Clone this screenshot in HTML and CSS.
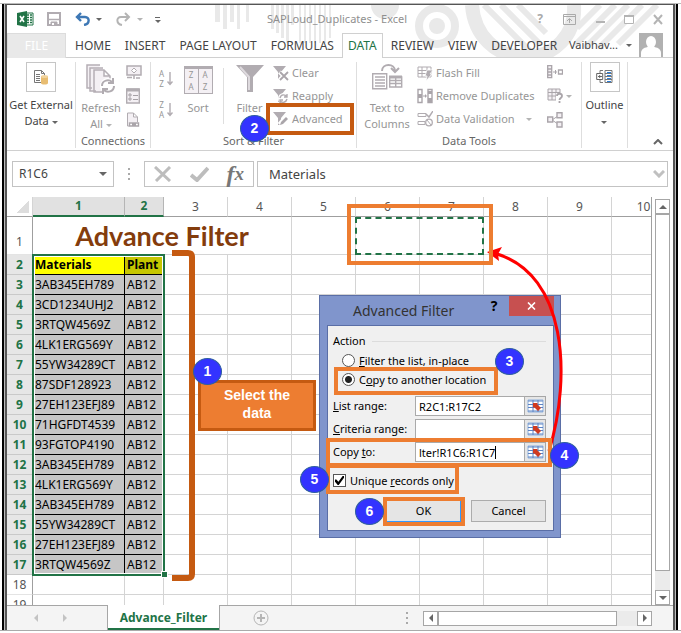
FILE: index.html
```html
<!DOCTYPE html>
<html lang="en">
<head>
<meta charset="utf-8">
<title>SAPLoud_Duplicates - Excel</title>
<link rel="stylesheet" href="styles.css">
</head>
<body>
<div class="screen">
<div class="frame">
<div class="window">

  <svg class="backdrop" width="460" height="53" viewBox="0 0 460 53" aria-hidden="true">
    <g fill="#e9e9e9">
      <path d="M0 0h5v17h-5zM8 0h4v24h-4zM15 0h4v17h-4zM22 0h3v24h-3zM31 0h3v17h-3zM56 0h3v24h-3zM61 0h3v28h-3zM66 0h3v33h-3zM71 0h3v38h-3zM76 0h3v20h-3zM84 0h2v38h-2zM89 0h2v38h-2zM94 0h2v38h-2zM99 0h2v38h-2zM104 0h2v38h-2zM109 0h2v38h-2zM114 0h2v33h-2z"/>
      <path d="M156 0h28a14 14 0 0 1-28 0z"/>
      <circle cx="222" cy="21" r="8"/>
    </g>
    <g fill="none" stroke="#e9e9e9">
      <circle cx="222" cy="21" r="18" stroke-width="8"/>
      <path d="M257 0c2 30 24 52 53 52s51-22 49-52" stroke-width="14"/>
      <path d="M269 0l46 46M286 0l40 40M303 0l28 28" stroke-width="6"/>
      <path d="M362 23l23-23M360 40l40-40M370 43l43-43M384 43l43-43M403 39l39-39" stroke-width="6"/>
    </g>
  </svg>

  <header class="titlebar">
    <svg class="app-icon" width="17" height="16" viewBox="0 0 17 16"><path d="M8 2h8v12H8z" fill="#fff" stroke="#217346"/><path d="M10 4h2M13 4h2M10 6.500h2M13 6.500h2M10 9h2M13 9h2M10 11.500h2M13 11.500h2" stroke="#217346" stroke-width="1.500"/><path d="M0 2l10-2v16L0 14z" fill="#217346"/><path d="M3 5l4 6M7 5l-4 6" stroke="#fff" stroke-width="1.600"/></svg>
    <button class="icon-btn save" aria-label="Save"><svg width="14" height="14" viewBox="0 0 14 14"><path d="M1 1h12v12H1z" fill="#fff" stroke="#b1acb1" stroke-width="2"/><path d="M2 7.500h10" stroke="#b1acb1" stroke-width="1.500"/><path d="M4 10h6v3H4z" fill="#b1acb1" stroke="#b1acb1"/><path d="M5 11h2v2H5z" fill="#fff"/></svg></button>
    <button class="icon-btn undo" aria-label="Undo"><svg width="16" height="14" viewBox="0 0 16 14"><path d="M6 1L2 5l4 4M2 5h8c5 0 5 7-1 8" fill="none" stroke="#3e78b5" stroke-width="2.400"/></svg></button>
    <span class="caret"></span>
    <button class="icon-btn redo" aria-label="Redo"><svg width="16" height="14" viewBox="0 0 16 14"><path d="M10 1l4 4-4 4M14 5H6c-5 0-5 7 1 8" fill="none" stroke="#b4b4b4" stroke-width="2"/></svg></button>
    <span class="caret pale"></span>
    <span class="customize"></span>
    <h1 class="doc-title">SAPLoud_Duplicates - Excel</h1>
    <div class="window-tools">
      <button class="icon-btn help" aria-label="Help">?</button>
      <button class="icon-btn" aria-label="Ribbon display options"><svg width="13" height="11" viewBox="0 0 13 11"><path d="M.5.500h12v10H.5zM.5 2.500h12M6.500 9V5M4 7l2.500-2.500L9 7" fill="none" stroke="#aaa"/></svg></button>
      <button class="icon-btn" aria-label="Minimize"><svg width="10" height="11" viewBox="0 0 10 11"><path d="M1 8h9" stroke="#b4b4b4" stroke-width="2"/></svg></button>
      <button class="icon-btn" aria-label="Maximize"><svg width="10" height="11" viewBox="0 0 10 11"><path d="M.5 1.500h9v8h-9z" fill="#fff" stroke="#b4b4b4"/><path d="M0 2h10" stroke="#b4b4b4" stroke-width="2"/></svg></button>
      <button class="icon-btn" aria-label="Close"><svg width="10" height="11" viewBox="0 0 10 11"><path d="M1 1l8 9M9 1l-8 9" stroke="#b4b4b4" stroke-width="2"/></svg></button>
    </div>
  </header>

  <nav class="tabs">
    <button class="tab file">FILE</button>
    <button class="tab">HOME</button>
    <button class="tab">INSERT</button>
    <button class="tab">PAGE LAYOUT</button>
    <button class="tab">FORMULAS</button>
    <button class="tab active">DATA</button>
    <button class="tab">REVIEW</button>
    <button class="tab">VIEW</button>
    <button class="tab">DEVELOPER</button>
    <button class="account">Vaibhav... <span class="caret dark"></span></button>
    <svg class="avatar" width="24" height="24" viewBox="0 0 24 24"><path d="M0 0h24v24H0z" fill="#b1b1b1"/><ellipse cx="12" cy="9" rx="5" ry="6" fill="#fff"/><path d="M2 24v-4c0-4 4-6 8-6h4c4 0 8 2 8 6v4z" fill="#fff"/></svg>
  </nav>

  <section class="ribbon">
    <div class="group external">
      <button class="big">
        <span class="boxed"><svg width="16" height="16" viewBox="0 0 16 16"><path d="M1.500 1.500h7l3 3v9h-10zM8.500 1.500v3h3M3 5.500h4M3 7.500h4M3 9.500h4M3 11.500h4" fill="#fff" stroke="#777"/><path d="M8 7h7v7c0 2-7 2-7 0z" fill="#e8bd72"/><ellipse cx="11.500" cy="7.500" rx="3.500" ry="1.500" fill="#f1d39c"/></svg></span>
        <span>Get External<br>Data <i class="caret dark"></i></span>
      </button>
    </div>
    <div class="group connections">
      <div class="tools">
        <button class="big off">
          <svg width="32" height="32" viewBox="0 0 32 32"><path d="M7 25H2V2h13M11 28H5V5h13M9 7h10l6 6v16H9zM19 7v6h6" fill="#f4f0f4" stroke="#b5afb5" stroke-width="1.500"/><circle cx="23" cy="23" r="8" fill="#fff"/><path d="M17 23c0-6 7-7 10-4M29 23c0 6-7 7-10 4M28 15v5h-5M18 31v-5h5" fill="none" stroke="#b1acb1" stroke-width="2"/></svg>
          <span>Refresh<br>All <i class="caret pale"></i></span>
        </button>
        <div class="stack icons">
          <button class="small off" aria-label="Connections"><svg width="16" height="15" viewBox="0 0 16 15"><path d="M1 1h14v9H1z" fill="#f4f0f4" stroke="#b1acb1" stroke-width="1.500"/><path d="M8 3l2.500 2.500L8 8 5.500 5.500z" fill="#fff" stroke="#b1acb1"/><path d="M1 12.500h5M8 10v4M10 13h4" stroke="#b1acb1" stroke-width="1.500"/></svg></button>
          <button class="small off" aria-label="Properties"><svg width="14" height="16" viewBox="0 0 14 16"><path d="M.7 1h12.600v14H.7z" fill="#f4f0f4" stroke="#b1acb1" stroke-width="1.400"/><path d="M1 2h12" stroke="#b1acb1" stroke-width="3"/><path d="M3 6h2v2H3zM3 10h2v2H3zM7 7.500h5M7 11.500h5" fill="none" stroke="#a5a0a5"/></svg></button>
          <button class="small off" aria-label="Edit links"><svg width="14" height="16" viewBox="0 0 14 16"><path d="M1.500 1h6l4 4v9h-10zM7.500 1v4h4" fill="#f4f0f4" stroke="#b1acb1"/><path d="M3 10h11v6H3z" fill="#fff"/><path d="M3.500 11h4v3h-4zM8.500 11h4v3h-4zM6 12.500h4" fill="none" stroke="#aaa5aa" stroke-width="1.400"/></svg></button>
        </div>
      </div>
      <h2>Connections</h2>
    </div>
    <div class="group sort">
      <div class="tools">
        <div class="stack sorters">
          <button class="small off" aria-label="Sort A to Z"><span class="az"><span>A</span><span>Z</span></span><svg width="6" height="16" viewBox="0 0 6 16"><path d="M3 1v12M.5 10.500L3 13.500l2.500-3" fill="none" stroke="#b1acb1" stroke-width="1.400"/></svg></button>
          <button class="small off" aria-label="Sort Z to A"><span class="az"><span>Z</span><span>A</span></span><svg width="6" height="16" viewBox="0 0 6 16"><path d="M3 1v12M.5 10.500L3 13.500l2.500-3" fill="none" stroke="#b1acb1" stroke-width="1.400"/></svg></button>
        </div>
        <button class="big off sort-btn">
          <span class="sort-icon"><b><span>Z</span><span>A</span></b><b><span>A</span><span>Z</span></b></span>
          <span>Sort</span>
        </button>
        <span class="divider"></span>
        <button class="big off filter-btn">
          <svg width="28" height="32" viewBox="0 0 28 32"><path d="M0 2h28L17 14v15h-6V14z" fill="#b1acb1"/><path d="M4 4l9 10v13" fill="none" stroke="#dedade" stroke-width="2"/></svg>
          <span>Filter</span>
        </button>
        <div class="stack">
          <button class="small off"><svg width="16" height="16" viewBox="0 0 16 16"><path d="M0 1h13L8 7v7H5V7z" fill="#b1acb1"/><path d="M6.500 7l8 8M14.500 7l-8 8" stroke="#fff" stroke-width="4"/><path d="M7 7l8 8M15 7l-8 8" stroke="#aaa5aa" stroke-width="1.800"/></svg>Clear</button>
          <button class="small off"><svg width="16" height="16" viewBox="0 0 16 16"><path d="M0 1h13L8 7v7H5V7z" fill="#b1acb1"/><circle cx="10.500" cy="10.500" r="5.500" fill="#fff"/><path d="M7 10c1-4 5-4 7-1M14 6v3h-3M14 11c-1 4-5 4-7 2M7 15v-3h3" fill="none" stroke="#b1acb1" stroke-width="1.400"/></svg>Reapply</button>
          <button class="small off"><svg width="16" height="16" viewBox="0 0 16 16"><path d="M0 1h13L8 7v7H5V7z" fill="#b1acb1"/><path d="M7 14l7-8" stroke="#fff" stroke-width="6"/><path d="M7 14l1-3 5-5 2 2-5 5z" fill="#aaa5aa"/></svg>Advanced</button>
        </div>
      </div>
      <h2>Sort &amp; Filter</h2>
    </div>
    <div class="group data">
      <div class="tools">
        <button class="big off columns-btn">
          <svg width="32" height="32" viewBox="0 0 32 32"><path d="M1.700 10.700h14v15h-14z" fill="#fff" stroke="#b1acb1" stroke-width="1.400"/><path d="M4 14h10M4 17h10M4 20h10M4 23h10" stroke="#b1acb1" stroke-width="1.400"/><path d="M18.700 14h12v10h-12zM24.700 14v10M19 17.500h12M19 20.500h12" fill="#fff" stroke="#b1acb1" stroke-width="1.400"/><path d="M18 14h13" stroke="#b1acb1" stroke-width="3"/><path d="M11 8c0-8 13-8 13 0M20 5l4 4 4-4" fill="none" stroke="#b1acb1" stroke-width="2"/></svg>
          <span>Text to<br>Columns</span>
        </button>
        <div class="stack">
          <button class="small off"><svg width="16" height="16" viewBox="0 0 16 16"><path d="M1 2h13v10H1zM1 5.500h13M1 8.500h13M5 2v10M10 2v10" fill="#fff" stroke="#b1acb1"/><path d="M10 5h6l-3 4h2l-6 7 1-5H8z" fill="#b1acb1" stroke="#fff" stroke-width=".8"/></svg>Flash Fill</button>
          <button class="small off"><svg width="16" height="16" viewBox="0 0 16 16"><path d="M1 1.500h4v13H1zM11 1.500h4v13h-4z" fill="#fff" stroke="#aaa5aa" stroke-width="1.400"/><path d="M1 6h4v4H1zM11 3h4v3h-4zM11 10h4v4h-4z" fill="#aaa5aa"/><path d="M6 8h4M8.500 6.500v3" stroke="#aaa5aa"/></svg>Remove Duplicates</button>
          <button class="small off"><svg width="16" height="16" viewBox="0 0 16 16"><path d="M1 2.500h8v3H1zM1 10.500h7v3H1z" fill="#fff" stroke="#b1acb1"/><path d="M9 3l3 3 4-6" fill="none" stroke="#b1acb1" stroke-width="1.500"/><circle cx="12" cy="11.500" r="3.300" fill="#fff" stroke="#b1acb1" stroke-width="1.300"/><path d="M10 9l4 5" stroke="#b1acb1"/></svg>Data Validation <i class="caret pale wide"></i></button>
        </div>
        <div class="stack icons last">
          <button class="small off" aria-label="Consolidate"><svg width="16" height="14" viewBox="0 0 16 14"><path d="M.7.700h4v12h-4zM1 4h4M1 7h4M1 10h4" fill="#f4f0f4" stroke="#aaa5aa" stroke-width="1.300"/><path d="M6 7h4M8.500 5v4" stroke="#aaa5aa"/><path d="M11.500 5h4v4h-4z" fill="#fff" stroke="#aaa5aa" stroke-width="1.300"/></svg></button>
          <button class="small off" aria-label="What-if analysis"><svg width="16" height="16" viewBox="0 0 16 16"><path d="M1 1h12v11H1zM1 4.500h12M1 8h12M5 1v11M9 1v11" fill="#f4f0f4" stroke="#aaa5aa"/><path d="M9 5h7v11H9z" fill="#fff"/><path d="M10 8c0-3 5-3 5 0 0 2-2.500 2-2.500 4M12.500 13v2" fill="none" stroke="#aaa5aa" stroke-width="1.800"/></svg><i class="caret pale"></i></button>
          <button class="small off" aria-label="Relationships"><svg width="16" height="16" viewBox="0 0 16 16"><path d="M5 8l6-4M5 8l6 4" stroke="#aaa5aa"/><path d="M.7 5h5v5h-5zM10 .7h5v5h-5zM10 10h5v5h-5z" fill="#f4f0f4" stroke="#aaa5aa" stroke-width="1.400"/></svg></button>
        </div>
      </div>
      <h2>Data Tools</h2>
    </div>
    <div class="group outline">
      <button class="big">
        <span class="boxed"><svg width="17" height="16" viewBox="0 0 17 16"><path d="M9 1.500h7v12H9zM9 4.500h7M9 7.500h7M9 10.500h7" fill="#fff" stroke="#777"/><path d="M11 3.500h4M11 6.500h4M11 9.500h4M11 12.500h4" stroke="#2b7cd3"/><path d="M4 4V1.500h3M4 11v2.500h3" fill="none" stroke="#777"/><path d="M.7 4.500h6v6h-6zM2 7.500h4M3.700 6v3" fill="none" stroke="#666"/></svg></span>
        <span>Outline<br><i class="caret dark"></i></span>
      </button>
    </div>
    <button class="icon-btn collapse" aria-label="Collapse the ribbon"><svg width="10" height="6" viewBox="0 0 10 6"><path d="M1 5l4-4 4 4" fill="none" stroke="#666" stroke-width="2"/></svg></button>
  </section>

  <section class="formula-bar">
    <div class="name-box"><input type="text" value="R1C6" aria-label="Name box"><button class="icon-btn" aria-label="Open names"><i class="caret big-caret"></i></button></div>
    <span class="grip"></span>
    <div class="entry-tools">
      <button class="icon-btn" aria-label="Cancel entry"><svg width="18" height="16" viewBox="0 0 18 16"><path d="M1 1l15 14M16 1L2 15" stroke="#bdbdbd" stroke-width="3"/></svg></button>
      <button class="icon-btn" aria-label="Enter"><svg width="19" height="16" viewBox="0 0 19 16"><path d="M1 9l6 5L18 2" fill="none" stroke="#bdbdbd" stroke-width="4"/></svg></button>
      <button class="icon-btn fx" aria-label="Insert function">f<small>x</small></button>
    </div>
    <div class="formula"><input type="text" value="Materials" aria-label="Formula"><svg width="12" height="8" viewBox="0 0 12 8"><path d="M1 1l5 5 5-5" fill="none" stroke="#c0c0c0" stroke-width="3"/></svg></div>
  </section>

  <section class="sheet">
    <div class="cells">
      <table>
        <colgroup><col class="c-head"><col class="c-one"><col class="c-two"><col class="c-std"><col class="c-std"><col class="c-std"><col class="c-std"><col class="c-std"><col class="c-std"><col class="c-std"><col class="c-std"></colgroup>
        <thead>
          <tr><th class="corner"><span></span></th><th class="on">1</th><th class="on">2</th><th>3</th><th>4</th><th>5</th><th>6</th><th>7</th><th>8</th><th>9</th><th>10</th></tr>
        </thead>
        <tbody>
          <tr class="title-row"><th>1</th><td colspan="4">Advance Filter</td><td></td><td></td><td></td><td></td><td></td><td></td></tr>
          <tr class="sel heading"><th>2</th><td>Materials</td><td>Plant</td><td></td><td></td><td></td><td></td><td></td><td></td><td></td><td></td></tr>
          <tr class="sel"><th>3</th><td>3AB345EH789</td><td>AB12</td><td></td><td></td><td></td><td></td><td></td><td></td><td></td><td></td></tr>
          <tr class="sel"><th>4</th><td>3CD1234UHJ2</td><td>AB12</td><td></td><td></td><td></td><td></td><td></td><td></td><td></td><td></td></tr>
          <tr class="sel"><th>5</th><td>3RTQW4569Z</td><td>AB12</td><td></td><td></td><td></td><td></td><td></td><td></td><td></td><td></td></tr>
          <tr class="sel"><th>6</th><td>4LK1ERG569Y</td><td>AB12</td><td></td><td></td><td></td><td></td><td></td><td></td><td></td><td></td></tr>
          <tr class="sel"><th>7</th><td>55YW34289CT</td><td>AB12</td><td></td><td></td><td></td><td></td><td></td><td></td><td></td><td></td></tr>
          <tr class="sel"><th>8</th><td>87SDF128923</td><td>AB12</td><td></td><td></td><td></td><td></td><td></td><td></td><td></td><td></td></tr>
          <tr class="sel"><th>9</th><td>27EH123EFJ89</td><td>AB12</td><td></td><td></td><td></td><td></td><td></td><td></td><td></td><td></td></tr>
          <tr class="sel"><th>10</th><td>71HGFDT4539</td><td>AB12</td><td></td><td></td><td></td><td></td><td></td><td></td><td></td><td></td></tr>
          <tr class="sel"><th>11</th><td>93FGTOP4190</td><td>AB12</td><td></td><td></td><td></td><td></td><td></td><td></td><td></td><td></td></tr>
          <tr class="sel"><th>12</th><td>3AB345EH789</td><td>AB12</td><td></td><td></td><td></td><td></td><td></td><td></td><td></td><td></td></tr>
          <tr class="sel"><th>13</th><td>4LK1ERG569Y</td><td>AB12</td><td></td><td></td><td></td><td></td><td></td><td></td><td></td><td></td></tr>
          <tr class="sel"><th>14</th><td>3AB345EH789</td><td>AB12</td><td></td><td></td><td></td><td></td><td></td><td></td><td></td><td></td></tr>
          <tr class="sel"><th>15</th><td>55YW34289CT</td><td>AB12</td><td></td><td></td><td></td><td></td><td></td><td></td><td></td><td></td></tr>
          <tr class="sel"><th>16</th><td>27EH123EFJ89</td><td>AB12</td><td></td><td></td><td></td><td></td><td></td><td></td><td></td><td></td></tr>
          <tr class="sel"><th>17</th><td>3RTQW4569Z</td><td>AB12</td><td></td><td></td><td></td><td></td><td></td><td></td><td></td><td></td></tr>
          <tr><th>18</th><td></td><td></td><td></td><td></td><td></td><td></td><td></td><td></td><td></td><td></td></tr>
          <tr><th>19</th><td></td><td></td><td></td><td></td><td></td><td></td><td></td><td></td><td></td><td></td></tr>
        </tbody>
      </table>
      <div class="selection"></div>
      <div class="marquee"></div>
    </div>
    <div class="vscroll">
      <button class="icon-btn step" aria-label="Scroll up"><i class="tri up"></i></button>
      <span class="thumb"></span><span class="track"></span>
      <button class="icon-btn step" aria-label="Scroll down"><i class="tri down"></i></button>
    </div>
  </section>

  <footer class="sheet-bar">
    <span class="nav-arrows"><i class="tri left pale"></i><i class="tri right pale"></i></span>
    <button class="sheet-tab">Advance_Filter</button>
    <button class="icon-btn add" aria-label="New sheet"><svg width="16" height="16" viewBox="0 0 16 16"><circle cx="8" cy="8" r="7" fill="none" stroke="#b5b5b5"/><path d="M8 4v8M4 8h8" stroke="#b5b5b5" stroke-width="2"/></svg></button>
    <span class="grip"></span>
    <div class="hscroll">
      <button class="icon-btn step" aria-label="Scroll left"><i class="tri left"></i></button>
      <span class="thumb"></span><span class="track"></span>
      <button class="icon-btn step" aria-label="Scroll right"><i class="tri right"></i></button>
    </div>
  </footer>
</div>
</div>
</div>

<form class="dialog" role="dialog" aria-labelledby="dialog-title">
  <div class="dialog-head">
    <h2 id="dialog-title">Advanced Filter</h2>
    <button type="button" class="icon-btn dialog-help" aria-label="Help">?</button>
    <button type="button" class="dialog-close" aria-label="Close"><svg width="9" height="8" viewBox="0 0 9 8"><path d="M1 .5l7 7M8 .5l-7 7" stroke="#fff" stroke-width="1.600"/></svg></button>
  </div>
  <div class="dialog-body">
    <div class="legend"><span>Action</span></div>
    <label class="choice"><input type="radio" name="action"><span><u>F</u>ilter the list, in-place</span></label>
    <label class="choice"><input type="radio" name="action" checked><span>C<u>o</u>py to another location</span></label>
    <div class="fields">
      <div class="field"><label for="list"><u>L</u>ist range:</label><input id="list" type="text" value="R2C1:R17C2"><button type="button" aria-label="Pick list range"><svg width="17" height="14" viewBox="0 0 17 14"><path d="M1 1h15v12H1z" fill="#fff" stroke="#8fb0dc"/><path d="M1 2h15M1 5.500h15M1 8.500h15M1 12h15M6 1v12M11 1v12" stroke="#5b83c4"/><path d="M6 4h5l-1 1 4 4-3 3-4-4-1 1z" fill="#d03a20"/></svg></button></div>
      <div class="field"><label for="criteria"><u>C</u>riteria range:</label><input id="criteria" type="text" value=""><button type="button" aria-label="Pick criteria range"><svg width="17" height="14" viewBox="0 0 17 14"><path d="M1 1h15v12H1z" fill="#fff" stroke="#8fb0dc"/><path d="M1 2h15M1 5.500h15M1 8.500h15M1 12h15M6 1v12M11 1v12" stroke="#5b83c4"/><path d="M6 4h5l-1 1 4 4-3 3-4-4-1 1z" fill="#d03a20"/></svg></button></div>
      <div class="field"><label for="copy">Copy <u>t</u>o:</label><input id="copy" type="text" value="lter!R1C6:R1C7"><button type="button" aria-label="Pick destination"><svg width="17" height="14" viewBox="0 0 17 14"><path d="M1 1h15v12H1z" fill="#fff" stroke="#8fb0dc"/><path d="M1 2h15M1 5.500h15M1 8.500h15M1 12h15M6 1v12M11 1v12" stroke="#5b83c4"/><path d="M6 4h5l-1 1 4 4-3 3-4-4-1 1z" fill="#d03a20"/></svg></button><span class="text-caret"></span></div>
    </div>
    <label class="choice unique"><input type="checkbox" checked><span>Unique <u>r</u>ecords only</span></label>
    <div class="actions"><button type="button" class="push primary">OK</button><button type="button" class="push">Cancel</button></div>
  </div>
</form>

<div class="notes">
  <svg class="strokes" width="681" height="633" viewBox="0 0 681 633" aria-hidden="true">
    <path d="M172 253h16q4 0 4 4v317q0 4-4 4h-16" fill="none" stroke="#c55a11" stroke-width="6"/>
    <path d="M549 451C572 375 566 275 497 254" fill="none" stroke="#f00" stroke-width="3"/>
    <path d="M487 252l15-5-4 7 1 7z" fill="#f00"/>
  </svg>
  <div class="mark mark-advanced"></div>
  <div class="mark mark-target"></div>
  <div class="mark mark-radio"></div>
  <div class="mark mark-unique"></div>
  <div class="mark mark-copy"></div>
  <div class="mark mark-ok"></div>
  <div class="callout">Select the data</div>
  <span class="badge b1">1</span><span class="badge b2">2</span><span class="badge b3">3</span>
  <span class="badge b4">4</span><span class="badge b5">5</span><span class="badge b6">6</span>
</div>
</body>
</html>
```
FILE: styles.css
```css
* { box-sizing: border-box; }
body { margin: 0; background: #fff; color: #444; font: 12px/16px "Noto Sans", sans-serif; overflow: hidden; position: relative; }
h1, h2 { margin: 0; font: inherit; }
button, input { font: inherit; color: inherit; }
button { padding: 0; border: 0; background: none; white-space: nowrap; }
svg { display: block; flex: none; }
.icon-btn { display: flex; align-items: center; justify-content: center; }

/* window frame */
.screen { height: calc(100vh - 5px); margin: 3px 0 2px; border-top: 1px solid #bbb; border-bottom: 1px solid #aaa; }
.frame { height: 100%; margin: 0 3px 0 2px; padding: 0 1px; border: solid #000; border-width: 0 2px; background: #bbb; }
.window { position: relative; height: 100%; display: flex; flex-direction: column; background: #fff; border: solid #555; border-width: 1px 2px 0; }
.backdrop { position: absolute; top: 0; left: 208px; }

.caret { display: inline-block; width: 0; height: 0; border: 3px solid transparent; border-top-color: #666; border-bottom: 0; vertical-align: middle; }
.caret.pale { border-top-color: #b4b4b4; }
.caret.wide { margin-left: 8px; }
.big-caret { border-width: 4px; border-bottom: 0; }

/* title bar */
.titlebar { position: relative; height: 28px; display: flex; align-items: center; padding: 0 10px; flex: none; }
.save { margin-left: 13px; }
.undo { margin-left: 14px; margin-right: 5px; }
.redo { margin-left: 13px; margin-right: 6px; }
.customize { width: 5px; height: 5px; margin-left: 12px; border-top: 1px solid #666; position: relative; }
.customize::after { content: ""; position: absolute; top: 2px; left: 0; border: 3px solid transparent; border-top-color: #666; border-bottom: 0; }
.doc-title { margin-left: 107px; color: #8f8f8f; flex: 1; font-size: 11px; white-space: nowrap; }
.window-tools { display: flex; align-items: center; gap: 19px; }
.help { color: #aaa; font-weight: 700; width: 8px; }

/* ribbon tabs */
.tabs { position: relative; height: 25px; display: flex; align-items: stretch; border-bottom: 1px solid #d0d0d0; flex: none; }
.tab { height: 25px; margin: 0 1px; padding: 0 5px; border: 1px solid transparent; border-bottom: 0; }
.tab.file { width: 59px; margin: 0 2px 0 0; background: #e9e9e9; border-color: #dcdcdc; color: #fff; }
.tab.active { background: #fff; border-color: #d0d0d0; color: #217346; }
.account { display: flex; align-items: center; gap: 8px; margin: 0 7px 0 auto; font-size: 11px; }
.avatar { margin-right: 10px; }

/* ribbon */
.ribbon { position: relative; height: 93px; display: flex; padding: 4px 0 0; border-bottom: 1px solid #d0d0d0; flex: none; font-size: 11px; }
.group { height: 86px; border-right: 1px solid #dedede; display: flex; flex-direction: column; flex: none; }
.group h2 { margin-top: auto; text-align: center; color: #666; line-height: 14px; }
.external { width: 69px; }
.connections { width: 75px; }
.sort { width: 206px; }
.data { width: 225px; }
.outline { width: 46px; }
.tools { display: flex; height: 70px; }
.big { display: flex; flex-direction: column; align-items: center; text-align: center; gap: 5px; }
.boxed { width: 30px; height: 30px; display: grid; place-items: center; border: 1px solid #c6c6c6; }
.off { color: #969696; }
.connections .big { width: 50px; padding-top: 1px; }
.stack { display: flex; flex-direction: column; gap: 7px; padding-top: 3px; }
.small { height: 16px; display: flex; align-items: center; gap: 3px; }
.icons { padding: 2px 0 0; gap: 8px; }
.sorters { gap: 15px; padding: 9px 0 0 8px; width: 31px; }
.az { display: grid; font-size: 8px; line-height: 10px; }
.sort-btn { width: 32px; padding-top: 4px; gap: 6px; }
.sort-icon { display: flex; gap: 1px; padding: 3px 1px 1px; background: #b1acb1; }
.sort-icon b { display: grid; width: 13px; background: #f4f0f4; font-size: 8px; font-weight: 400; line-height: 12px; }
.divider { width: 1px; height: 56px; margin: 6px 10px 0 9px; background: #dedede; }
.filter-btn { width: 31px; padding-top: 1px; }
.filter-btn + .stack { margin-left: 8px; }
.columns-btn { width: 60px; padding-top: 1px; }
.data .last { margin-left: auto; width: 34px; }
.collapse { margin: auto 10px 0 auto; height: 16px; }

/* formula bar */
.formula-bar { height: 46px; display: flex; padding: 10px 5px; flex: none; }
.formula-bar input { border: 0; outline: 0; padding: 0; background: none; min-width: 0; flex: 1; font-size: 13px; }
.formula-bar .name-box input { font-size: 12px; }
.name-box, .entry-tools, .formula { height: 26px; display: flex; align-items: center; border: 1px solid #c3c3c3; }
.name-box { width: 102px; padding: 0 6px; }
.grip { width: 2px; height: 12px; align-self: center; background: repeating-linear-gradient(#aaa 0 2px, transparent 2px 5px); }
.formula-bar .grip { margin: 0 14px; }
.entry-tools { width: 110px; padding: 0 9px; justify-content: space-between; }
.fx { font: italic 700 24px/24px "Liberation Serif", serif; color: #777; }
.fx small { font-size: 19px; }
.formula { flex: 1; margin-left: 3px; padding: 0 2px 0 11px; }

/* worksheet */
.sheet { flex: 1; min-height: 0; display: flex; gap: 3px; padding-right: 3px; }
.cells { position: relative; flex: 1; min-width: 0; overflow: hidden; border-right: 1px solid #a0a0a0; }
table { width: 669px; table-layout: fixed; border-collapse: separate; border-spacing: 0; color: #000; font: 12px/18px "Noto Sans", sans-serif; }
.c-head { width: 26px; }
.c-one { width: 92px; }
.c-two { width: 39px; }
.c-std { width: 64px; }
td, th { height: 20px; padding: 0; border: solid #d4d4d4; border-width: 0 1px 1px 0; overflow: hidden; white-space: nowrap; }
th { color: #555; font: 12px/16px "Noto Sans", sans-serif; text-align: center; }
thead th { border-bottom: 1px solid #9f9f9f; }
thead .on { background: #e1e1e1; color: #217346; font-weight: 700; border-bottom: 2px solid #217346; border-right-color: #b5b5b5; }
.corner span { display: block; width: 12px; height: 12px; margin-left: 10px; background: linear-gradient(135deg, transparent 50%, #ddd 50%); }
tbody th { border-right-color: #9f9f9f; border-bottom-color: #e4e4e4; }
.title-row > * { height: 38px; }
.title-row th { vertical-align: bottom; padding-bottom: 4px; }
.title-row td { color: #843c0c; font-family: Lato, sans-serif; font-size: 27px; line-height: 32px; font-weight: 700; text-align: center; }
.sel th { background: #e6e6e6; color: #217346; font-weight: 700; border-bottom-color: #c9c9c9; }
.sel td:nth-child(2), .sel td:nth-child(3) { background: #c6c6c6; border-color: #000; padding-left: 2px; }
.heading td { font-weight: 700; }
.sel.heading td:nth-child(2) { background: #ff0; }
.sel.heading td:nth-child(3) { background: #c6c600; }
.selection { position: absolute; left: 25px; top: 57px; width: 133px; height: 322px; border: 2px solid #217346; box-shadow: inset 0 0 0 1px #fff; }
.selection::after { content: ""; position: absolute; right: -4px; bottom: -3px; width: 5px; height: 5px; background: #217346; outline: 1px solid #fff; }
.marquee { position: absolute; left: 348px; top: 20px; width: 129px; height: 38px; border: 2px dashed #217346; }

.thumb { background: #fff; border: 1px solid #a6a6a6; flex: 1; }
.track { background: #ebebeb; }
.step { width: 15px; height: 15px; border: 1px solid #a6a6a6; background: #fff; flex: none; }
.vscroll { width: 15px; display: flex; flex-direction: column; padding-top: 2px; }
.vscroll .track { height: 19px; }
.tri { border: 4px solid transparent; }
.tri.up { border-top: 0; border-bottom-color: #666; }
.tri.down { border-bottom: 0; border-top-color: #666; }
.tri.left { border-left: 0; border-right-color: #666; }
.tri.right { border-right: 0; border-left-color: #666; }
.tri.left.pale { border-right-color: #c3c3c3; }
.tri.right.pale { border-left-color: #c3c3c3; }

.sheet-bar { height: 25px; display: flex; align-items: center; background: #f4f4f4; border-top: 1px solid #a6a6a6; flex: none; padding-right: 21px; }
.nav-arrows { width: 100px; padding-left: 27px; display: flex; gap: 25px; }
.sheet-tab { align-self: stretch; width: 113px; margin-top: -1px; background: #fff; border: solid #a6a6a6; border-width: 0 1px; box-shadow: inset 0 -2px #217346; color: #217346; font-weight: 700; }
.add { margin-left: 33px; }
.sheet-bar .grip { margin: 0 15px 0 auto; }
.hscroll { display: flex; width: 229px; height: 15px; }
.hscroll .track { width: 20px; }

/* dialog */
.dialog { position: absolute; left: 319px; top: 295px; width: 242px; padding: 0 6px 6px 7px; background: #8095cc; border: 1px solid #5a6ea6; color: #000; font-size: 11px; }
.dialog-head { display: flex; height: 29px; align-items: flex-start; }
.dialog-head h2 { flex: 1; padding-left: 26px; color: #333; font-size: 14px; line-height: 29px; white-space: nowrap; }
.dialog-help { width: 10px; height: 20px; margin-right: 10px; font-size: 14px; font-weight: 700; }
.dialog-close { width: 45px; height: 20px; background: #c75050; display: grid; place-items: center; }
.dialog-body { border: 1px solid #5a6ea6; background: #f0f0f0; padding: 5px 7px 8px 5px; }
.legend { display: flex; align-items: center; gap: 6px; height: 20px; }
.legend::after { content: ""; flex: 1; height: 1px; background: #dcdcdc; }
.choice { display: flex; align-items: center; gap: 4px; height: 19px; padding-left: 9px; white-space: nowrap; }
.choice input { appearance: none; width: 13px; height: 13px; margin: 0; border: 1px solid #555; background: #fff; }
.choice input[type="radio"] { border-radius: 50%; }
.choice input[type="radio"]:checked { background: radial-gradient(#222 0 3px, #fff 4px); }
.choice input[type="checkbox"]:checked::before { content: ""; display: block; width: 9px; height: 9px; margin: 1px; background: #000; clip-path: polygon(0 40%, 15% 40%, 38% 65%, 85% 0, 100% 0, 100% 20%, 42% 100%, 30% 100%, 0 65%); }
.fields { display: grid; grid-template-columns: minmax(0, 1fr); gap: 3px; margin-top: 7px; }
.field { position: relative; display: flex; align-items: center; }
.field label { width: 82px; white-space: nowrap; }
.field input { flex: 1; min-width: 0; height: 20px; padding: 0 3px; border: 1px solid #aaa; background: #fff; outline: 0; }
.field button { width: 21px; height: 20px; border: 1px solid #a6a6a6; border-left: 0; background: #e6e6e6; display: grid; place-items: center; }
.text-caret { position: absolute; left: 162px; top: 4px; width: 1px; height: 13px; background: #000; }
.unique { margin-top: 9px; padding-left: 0; }
.actions { display: flex; justify-content: flex-end; gap: 10px; margin-top: 10px; }
.push { width: 75px; height: 22px; border: 1px solid #acacac; background: #e5e5e5; }
.push.primary { border-color: #3399ff; }

/* annotations */
.notes { position: absolute; inset: 0; pointer-events: none; }
.strokes, .mark, .badge, .callout { position: absolute; }
.strokes { inset: 0; }
.mark { border: 4px solid #ed7d31; }
.mark-advanced { left: 266px; top: 103px; width: 88px; height: 32px; border-color: #c55a11; }
.mark-target { left: 347px; top: 204px; width: 146px; height: 61px; }
.mark-radio { left: 334px; top: 367px; width: 164px; height: 28px; }
.mark-copy { left: 326px; top: 438px; width: 226px; height: 29px; }
.mark-unique { left: 326px; top: 464px; width: 133px; height: 30px; }
.mark-ok { left: 383px; top: 497px; width: 82px; height: 29px; }
.callout { left: 198px; top: 380px; width: 118px; height: 51px; padding: 3px 18px; background: #ed7d31; border: 3px solid #c55a11; color: #fff; font: 700 14px/18px "Liberation Sans", sans-serif; text-align: center; }
.badge { width: 29px; height: 27px; border: 1px solid #2f5f9f; border-radius: 50%; background: #33f; color: #fff; font: 700 14px/24px "Liberation Sans", sans-serif; text-align: center; }
.b1 { left: 193px; top: 358px; }
.b2 { left: 240px; top: 115px; }
.b3 { left: 495px; top: 348px; }
.b4 { left: 550px; top: 442px; }
.b5 { left: 300px; top: 466px; }
.b6 { left: 355px; top: 498px; }
```
